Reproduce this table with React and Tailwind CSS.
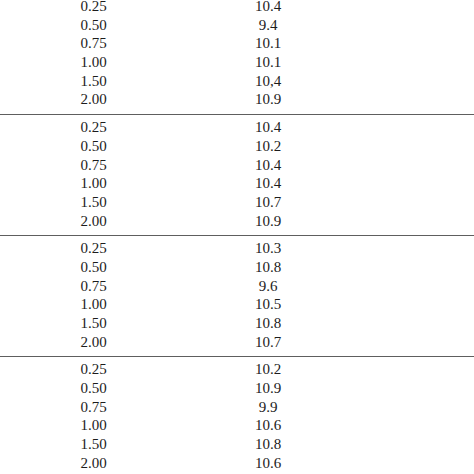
const blocks = [
    [['0.25', '10.4'], ['0.50', '9.4'], ['0.75', '10.1'], ['1.00', '10.1'], ['1.50', '10,4'], ['2.00', '10.9']],
    [['0.25', '10.4'], ['0.50', '10.2'], ['0.75', '10.4'], ['1.00', '10.4'], ['1.50', '10.7'], ['2.00', '10.9']],
    [['0.25', '10.3'], ['0.50', '10.8'], ['0.75', '9.6'], ['1.00', '10.5'], ['1.50', '10.8'], ['2.00', '10.7']],
    [['0.25', '10.2'], ['0.50', '10.9'], ['0.75', '9.9'], ['1.00', '10.6'], ['1.50', '10.8'], ['2.00', '10.6']],
]

export default function App() {
    return (
        <div className="w-[474px] h-[474px] overflow-hidden bg-white text-[#1c1c1c] font-['Liberation_Serif',serif] text-[15px]">
            <div className="-mt-[6px]">
                {blocks.map((rows, i) => (
                    <div
                        key={i}
                        className={`pt-[3px] pb-[5px] ${i < blocks.length - 1 ? 'border-b-[1.5px] border-[#5e5e5e]' : ''}`}
                    >
                        {rows.map(([a, b], j) => (
                            <div key={j} className="grid grid-cols-[187px_162px_1fr] leading-[18.7px] h-[18.7px]">
                                <span className="text-center">{a}</span>
                                <span className="text-center">{b}</span>
                                <span />
                            </div>
                        ))}
                    </div>
                ))}
            </div>
        </div>
    )
}
